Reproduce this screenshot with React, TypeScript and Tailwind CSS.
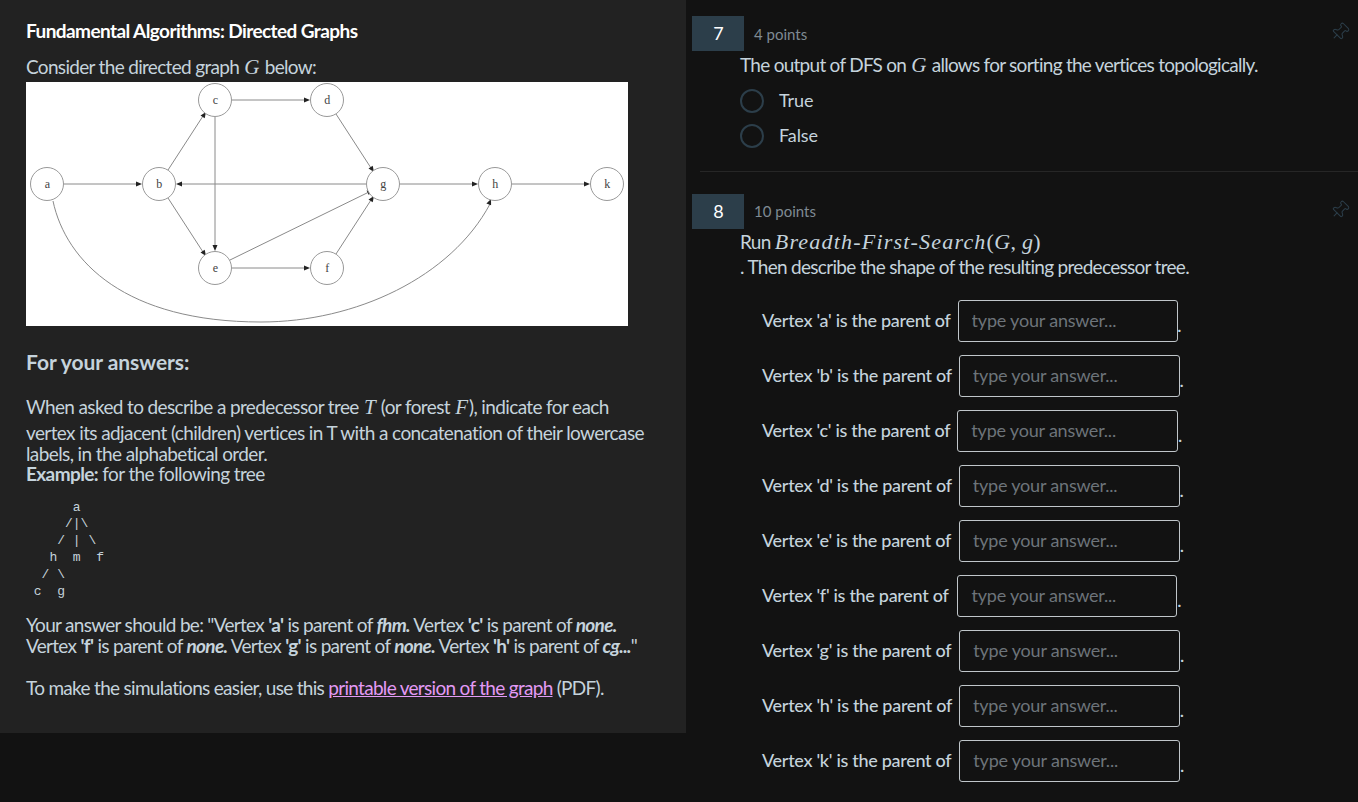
import { Pin } from "lucide-react";

const nodes = [
  { id: "a", x: 21, y: 102 },
  { id: "b", x: 133, y: 102 },
  { id: "c", x: 189, y: 18 },
  { id: "d", x: 301, y: 18 },
  { id: "e", x: 189, y: 186 },
  { id: "f", x: 301, y: 186 },
  { id: "g", x: 357, y: 102 },
  { id: "h", x: 469, y: 102 },
  { id: "k", x: 581, y: 102 },
];

const edges = [
  "M38 102H111",
  "M344 102H155",
  "M374 102H447",
  "M486 102H559",
  "M206 18H279",
  "M206 186H279",
  "M189 35V164",
  "M142 88L177 34",
  "M142 116L177 170",
  "M310 32L345 86",
  "M310 172L345 118",
  "M204 178L343 110",
];

const arrows = [
  "M116 102l-6-2.5v5z",
  "M150 102l6-2.5v5z",
  "M452 102l-6-2.5v5z",
  "M564 102l-6-2.5v5z",
  "M284 18l-6-2.5v5z",
  "M284 186l-6-2.5v5z",
  "M189 169l-2.5-6h5z",
  "M180 30l-5.5 3.5 4.2 2.7z",
  "M180 174l-5.5-3.5 4.2-2.7z",
  "M348 90l-5.5-3.5 4.2-2.7z",
  "M348 114l-5.5 3.5 4.2 2.7z",
  "M347 108l-6.4.5 2.2 4.4z",
  "M465 117l-4.6 4.6 4.7 1.6z",
];

const rows = [
  { letter: "a", w: 220, gap: 7 },
  { letter: "b", w: 221, gap: 7 },
  { letter: "c", w: 221, gap: 7 },
  { letter: "d", w: 221, gap: 7 },
  { letter: "e", w: 221, gap: 8 },
  { letter: "f", w: 220, gap: 9 },
  { letter: "g", w: 221, gap: 8 },
  { letter: "h", w: 221, gap: 7 },
  { letter: "k", w: 221, gap: 8 },
];

const tree = `      a
     /|\\
    / | \\
   h  m  f
  / \\
 c  g`;

function Graph() {
  return (
    <svg viewBox="0 0 602 244" className="block h-[244px] w-[602px] bg-white">
      <g fill="none" stroke="#8a8a8a" strokeWidth="1">
        {edges.map((d) => (
          <path key={d} d={d} />
        ))}
        <path d="M27 119C40 180 100 240 235 240C330 240 425 195 464 122" />
      </g>
      <g fill="#222">
        {arrows.map((d) => (
          <path key={d} d={d} />
        ))}
      </g>
      {nodes.map((n) => (
        <g key={n.id}>
          <circle cx={n.x} cy={n.y} r="16.5" fill="#fff" stroke="#999" strokeWidth="1" />
          <text
            x={n.x}
            y={n.y + 3.5}
            textAnchor="middle"
            fontSize="12"
            fill="#444"
            fontFamily='"Liberation Serif", serif'
          >
            {n.id}
          </text>
        </g>
      ))}
    </svg>
  );
}

function Mi({ children }: { children: string }) {
  return <i className="mx-[1px] font-['Liberation_Serif',serif] text-[21px] tracking-normal">{children}</i>;
}

function QuestionHead({ num, points, shift }: { num: number; points: string; shift?: boolean }) {
  return (
    <div className="flex h-[35px] items-center">
      <div className="flex h-[35px] w-[52px] items-center justify-center bg-[#2c3e4a] text-[18px] text-white">{num}</div>
      <span className={shift ? "ml-[10px] pt-[2px] text-[15px] tracking-normal text-[#7f8a92]" : "ml-[10px] text-[15px] tracking-normal text-[#7f8a92]"}>
        {points}
      </span>
      <Pin size={20} strokeWidth={1.25} className="ml-auto mb-[4px] mr-[8px] rotate-45 text-[#2c3e4a]" />
    </div>
  );
}

function Radio({ label }: { label: string }) {
  return (
    <div className="flex h-[35px] items-center">
      <span className="h-[24px] w-[24px] rounded-full border-2 border-[#2c3e4a]" />
      <span className="ml-[15px] text-[18px] tracking-[-0.1px] text-[#c5d3dc]">{label}</span>
    </div>
  );
}

export default function App() {
  return (
    <div className="flex h-[802px] w-[1358px] items-start overflow-hidden bg-[#121212] font-['Lato',sans-serif] text-[19px] tracking-[-0.7px] text-[#c5d3dc]">
      <div className="h-[733px] w-[686px] shrink-0 bg-[#222222] pl-[26px] pr-[30px] pt-[20px]">
        <h1 className="text-[19px] leading-[22px] font-bold tracking-[-0.58px] text-white">Fundamental Algorithms: Directed Graphs</h1>
        <p className="mt-[14px] h-[26px] leading-[22px] tracking-[-0.68px]">
          Consider the directed graph <Mi>G</Mi> below:
        </p>
        <Graph />
        <h2 className="mt-[24px] text-[21px] leading-[24px] font-bold tracking-[-0.05px]">For your answers:</h2>
        <p className="mt-[22px] leading-[21px] tracking-[-0.63px]">
          When asked to describe a predecessor tree <Mi>T</Mi> (or forest <Mi>F</Mi>), indicate for each
        </p>
        <p className="mt-[5px] leading-[20.5px] tracking-[-0.61px]">
          vertex its adjacent (children) vertices in T with a concatenation of their lowercase
          <br />
          labels, in the alphabetical order.
          <br />
          <b>Example:</b> for the following tree
        </p>
        <pre className="mt-[15px] font-['Liberation_Mono',monospace] text-[13px] leading-[16.9px] tracking-normal">{tree}</pre>
        <p className="mt-[13px] leading-[21px]">
          Your answer should be: "Vertex <b>'a'</b> is parent of <b><i>fhm.</i></b> Vertex <b>'c'</b> is parent of{" "}
          <b><i>none.</i></b>
          <br />
          Vertex <b>'f'</b> is parent of <b><i>none.</i></b> Vertex <b>'g'</b> is parent of <b><i>none.</i></b> Vertex{" "}
          <b>'h'</b> is parent of <b><i>cg...</i></b>"
        </p>
        <p className="mt-[21px] leading-[21px]">
          To make the simulations easier, use this{" "}
          <a href="#" className="text-[#e39af5] underline">printable version of the graph</a> (PDF).
        </p>
      </div>

      <div className="flex-1 pl-[6px] pt-[16px]">
        <QuestionHead num={7} points="4 points" shift />
        <div className="pl-[48px]">
          <p className="mt-[1px] h-[27px] leading-[26px] tracking-[-0.73px]">
            The output of DFS on <Mi>G</Mi> allows for sorting the vertices topologically.
          </p>
          <div className="mt-[4px]">
            <Radio label="True" />
            <Radio label="False" />
          </div>
        </div>
        <div className="ml-[8px] mt-[18px] h-px bg-[#262626]" />
        <div className="mt-[22px]">
          <QuestionHead num={8} points="10 points" />
        </div>
        <div className="pl-[48px]">
          <p className="h-[26px] leading-[26px]">
            Run <i className="font-['Liberation_Serif',serif] text-[22px] tracking-[1.2px]">Breadth-First-Search</i>
            <span className="font-['Liberation_Serif',serif] text-[22px] tracking-[0.3px]">(<i>G</i>, <i>g</i>)</span>
          </p>
          <p className="leading-[24px]">. Then describe the shape of the resulting predecessor tree.</p>
          <div className="mt-[21px] flex flex-col gap-[13px] pl-[22px]">
            {rows.map((r) => (
              <div key={r.letter} className="flex h-[42px] items-center text-[18px] tracking-[-0.3px]">
                <span className="pb-[2px] font-medium">Vertex '{r.letter}' is the parent of</span>
                <input
                  placeholder="type your answer..."
                  style={{ width: r.w, marginLeft: r.gap }}
                  className="h-[42px] rounded-[3px] border border-[#c0c6ca] bg-transparent px-[13px] pb-[2px] text-[18px] tracking-[-0.2px] placeholder:text-[#6d747a]"
                />
                <span className="self-end pb-[8px] text-[16px] leading-none font-bold">.</span>
              </div>
            ))}
          </div>
        </div>
      </div>
    </div>
  );
}
